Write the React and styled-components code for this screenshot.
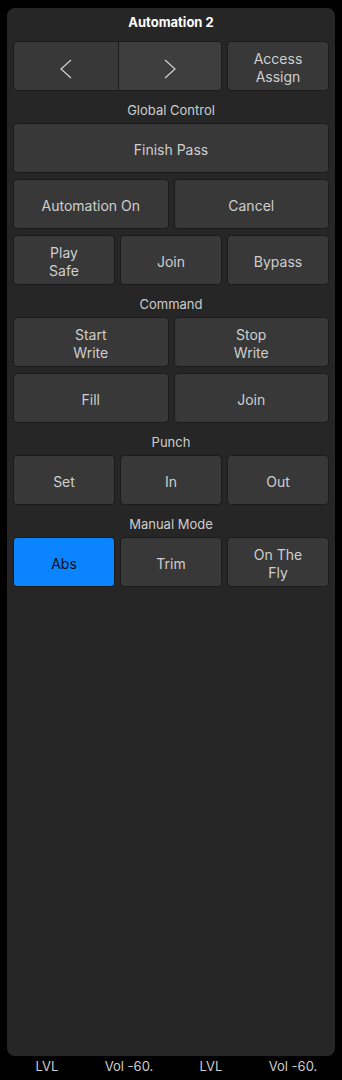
import React from 'react';
import styled, { createGlobalStyle } from 'styled-components';

const GlobalStyle = createGlobalStyle`
  html, body {
    margin: 0;
    padding: 0;
    background: #000;
  }
  body {
    font-family: Inter, "Noto Sans", sans-serif;
    -webkit-font-smoothing: antialiased;
  }
`;

const Page = styled.div`
  width: 342px;
  padding: 8px 7px 0;
  box-sizing: border-box;
`;

const Panel = styled.div`
  height: 1048px;
  background: #262626;
  border-radius: 8px;
  padding: 0 6px;
  box-sizing: border-box;
  display: flex;
  flex-direction: column;
`;

const Title = styled.div`
  height: 28px;
  display: flex;
  align-items: center;
  justify-content: center;
  margin-bottom: 5px;
  color: #fff;
  font-weight: 700;
  font-size: 13px;
`;

const Section = styled.div`
  height: 20px;
  margin: 6px 0;
  padding-top: 6px;
  box-sizing: border-box;
  display: flex;
  align-items: center;
  justify-content: center;
  color: #cdcdcd;
  font-size: 13px;
`;

const Row = styled.div`
  display: grid;
  grid-template-columns: repeat(${(p) => p.cols}, 1fr);
  column-gap: 5px;
  margin-bottom: ${(p) => (p.last ? 0 : 6)}px;
`;

const Button = styled.div`
  height: 50px;
  padding-top: 4px;
  box-sizing: border-box;
  border: 1px solid #1b1b1b;
  border-radius: 4px;
  background: ${(p) => (p.active ? '#0a84ff' : '#383838')};
  color: ${(p) => (p.active ? '#0d0d0d' : '#cfcfcf')};
  font-size: 14px;
  line-height: 18px;
  text-align: center;
  display: flex;
  align-items: center;
  justify-content: center;
  white-space: pre-line;
`;

const NavGroup = styled.div`
  grid-column: span 2;
  display: grid;
  grid-template-columns: 104px 1fr;
  border: 1px solid #1b1b1b;
  border-radius: 4px;
  overflow: hidden;
  height: 50px;
  box-sizing: border-box;
`;

const NavButton = styled.div`
  background: ${(p) => (p.lit ? '#3e3e3e' : '#383838')};
  border-left: ${(p) => (p.lit ? '1px solid #1b1b1b' : 'none')};
  padding-top: 6px;
  display: flex;
  align-items: center;
  justify-content: center;
`;

const Footer = styled.div`
  display: grid;
  grid-template-columns: repeat(4, 82px);
  margin-left: -1px;
  height: 20px;
  align-items: center;
  color: #cdcdcd;
  font-size: 13px;
  text-align: center;
`;

const Chevron = ({ dir }) => (
  <svg width="14" height="26" viewBox="0 0 14 26">
    <polyline
      points={dir === 'left' ? '12,4 2,13 12,22' : '2,4 12,13 2,22'}
      fill="none"
      stroke="#d0d0d0"
      strokeWidth="1.2"
    />
  </svg>
);

const App = () => (
  <Page>
    <GlobalStyle />
    <Panel>
      <Title>Automation 2</Title>
      <Row cols={3} last>
        <NavGroup>
          <NavButton>
            <Chevron dir="left" />
          </NavButton>
          <NavButton lit>
            <Chevron dir="right" />
          </NavButton>
        </NavGroup>
        <Button>{'Access\nAssign'}</Button>
      </Row>

      <Section>Global Control</Section>
      <Row cols={1}>
        <Button>Finish Pass</Button>
      </Row>
      <Row cols={2}>
        <Button>Automation On</Button>
        <Button>Cancel</Button>
      </Row>
      <Row cols={3} last>
        <Button>{'Play\nSafe'}</Button>
        <Button>Join</Button>
        <Button>Bypass</Button>
      </Row>

      <Section>Command</Section>
      <Row cols={2}>
        <Button>{'Start\nWrite'}</Button>
        <Button>{'Stop\nWrite'}</Button>
      </Row>
      <Row cols={2} last>
        <Button>Fill</Button>
        <Button>Join</Button>
      </Row>

      <Section>Punch</Section>
      <Row cols={3} last>
        <Button>Set</Button>
        <Button>In</Button>
        <Button>Out</Button>
      </Row>

      <Section>Manual Mode</Section>
      <Row cols={3} last>
        <Button active>Abs</Button>
        <Button>Trim</Button>
        <Button>{'On The\nFly'}</Button>
      </Row>
    </Panel>
    <Footer>
      <span>LVL</span>
      <span>Vol -60.</span>
      <span>LVL</span>
      <span>Vol -60.</span>
    </Footer>
  </Page>
);

export default App;
